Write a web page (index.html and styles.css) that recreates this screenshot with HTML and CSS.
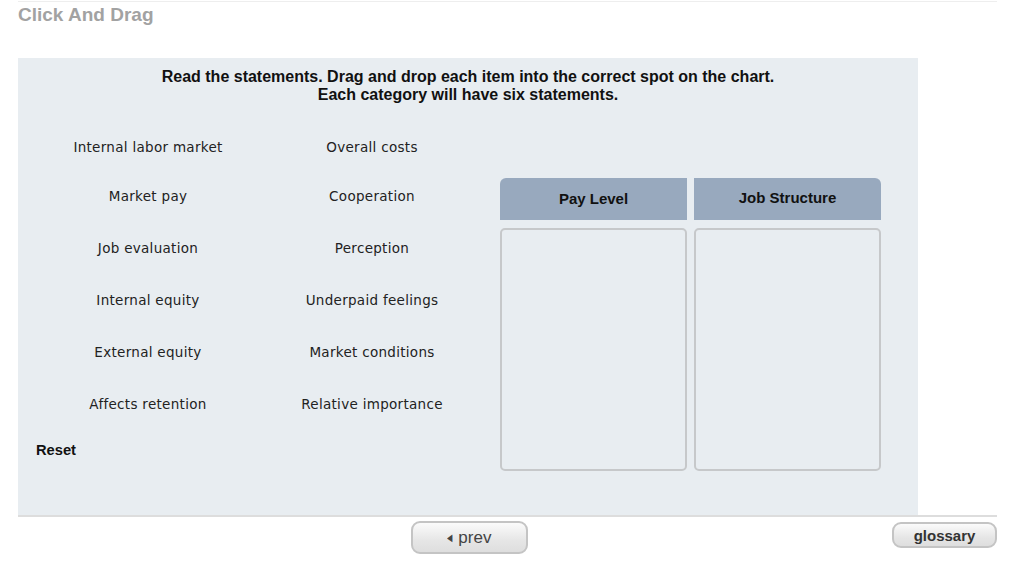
FILE: index.html
```html
<!DOCTYPE html>
<html lang="en">
<head>
    <meta charset="UTF-8">
    <title>Click And Drag</title>
    <link rel="stylesheet" href="styles.css">
</head>
<body>
    <div class="page">
        <h1 class="title">Click And Drag</h1>

        <div class="panel">
            <p class="instructions">
                Read the statements. Drag and drop each item into the correct spot on the chart.<br>
                Each category will have six statements.
            </p>

            <div class="work-area">
                <div class="items-area">
                    <div class="items">
                        <div class="item">Internal labor market</div>
                        <div class="item">Overall costs</div>
                        <div class="item">Market pay</div>
                        <div class="item">Cooperation</div>
                        <div class="item">Job evaluation</div>
                        <div class="item">Perception</div>
                        <div class="item">Internal equity</div>
                        <div class="item">Underpaid feelings</div>
                        <div class="item">External equity</div>
                        <div class="item">Market conditions</div>
                        <div class="item">Affects retention</div>
                        <div class="item">Relative importance</div>
                    </div>
                    <a class="reset">Reset</a>
                </div>

                <div class="chart">
                    <div class="chart-col">
                        <div class="chart-head head-left">Pay Level</div>
                        <div class="drop-box"></div>
                    </div>
                    <div class="chart-col">
                        <div class="chart-head head-right">Job Structure</div>
                        <div class="drop-box"></div>
                    </div>
                </div>
            </div>
        </div>

        <div class="footer">
            <button class="btn btn-prev"><span class="arrow">&#9664;</span> prev</button>
            <button class="btn btn-glossary">glossary</button>
        </div>
    </div>
</body>
</html>
```

FILE: styles.css
```css
body {
    margin: 0;
    padding: 0;
    background-color: white;
    font-family: "Liberation Sans", Arial, sans-serif;
}

.page {
    width: 979px;
    margin-left: 18px;
    border-top: 1px solid #eeeeee;
    margin-top: 1px;
}

.title {
    margin: 2px 0 0 0;
    font-size: 19px;
    line-height: 22px;
    color: #a2a2a2;
    font-weight: bold;
}

.panel {
    box-sizing: border-box;
    width: 900px;
    height: 457px;
    margin-top: 32px;
    background-color: #e8edf1;
    padding: 10px 0 0 18px;
}

.instructions {
    margin: 0;
    padding-right: 18px;
    text-align: center;
    font-size: 16px;
    line-height: 18px;
    font-weight: bold;
    color: #111;
}

.work-area {
    display: flex;
    margin-top: 20px;
}

.items {
    display: grid;
    grid-template-columns: 224px 224px;
    grid-template-rows: 46px repeat(5, 52px);
}

    .item {
        display: flex;
        align-items: center;
        justify-content: center;
        font-family: "DejaVu Sans", Verdana, sans-serif;
        font-size: 13.5px;
        letter-spacing: 0.3px;
        color: #222;
    }

.reset {
    display: block;
    margin-top: 11px;
    font-size: 14.7px;
    line-height: 18px;
    font-weight: bold;
    color: #111;
    cursor: pointer;
}

.chart {
    display: flex;
    gap: 7px;
    margin-left: 16px;
    margin-top: 54px;
}

.chart-col {
    width: 187px;
}

.chart-head {
    height: 42px;
    box-sizing: border-box;
    display: flex;
    align-items: center;
    justify-content: center;
    background-color: #98a9be;
    font-size: 15px;
    font-weight: bold;
    color: #111;
}

    .head-left {
        border-top-left-radius: 6px;
        padding-bottom: 2px;
    }

    .head-right {
        border-top-right-radius: 6px;
        padding-bottom: 4px;
    }

.drop-box {
    box-sizing: border-box;
    height: 243px;
    margin-top: 8px;
    border: 2px solid #c6c8ca;
    border-radius: 5px;
}

.footer {
    display: flex;
    align-items: flex-start;
    border-top: 2px solid #dddddd;
    padding-top: 4px;
}

.btn {
    box-sizing: border-box;
    border: 2px solid #c4c4c4;
    border-radius: 9px;
    background: linear-gradient(#fbfbfb, #e6e6e6 60%, #dedede);
    font-family: "Liberation Sans", Arial, sans-serif;
    cursor: pointer;
}

.btn-prev {
    margin-left: 393px;
    width: 117px;
    height: 33px;
    font-size: 17px;
    color: #444;
    padding: 0 2px 0 0;
}

    .btn-prev .arrow {
        display: inline-block;
        font-size: 10px;
        transform: scaleX(0.7);
        vertical-align: 2px;
    }

.btn-glossary {
    margin-left: auto;
    margin-top: 1px;
    width: 105px;
    height: 26px;
    font-size: 15px;
    font-weight: bold;
    color: #333;
    padding: 0;
}
```
